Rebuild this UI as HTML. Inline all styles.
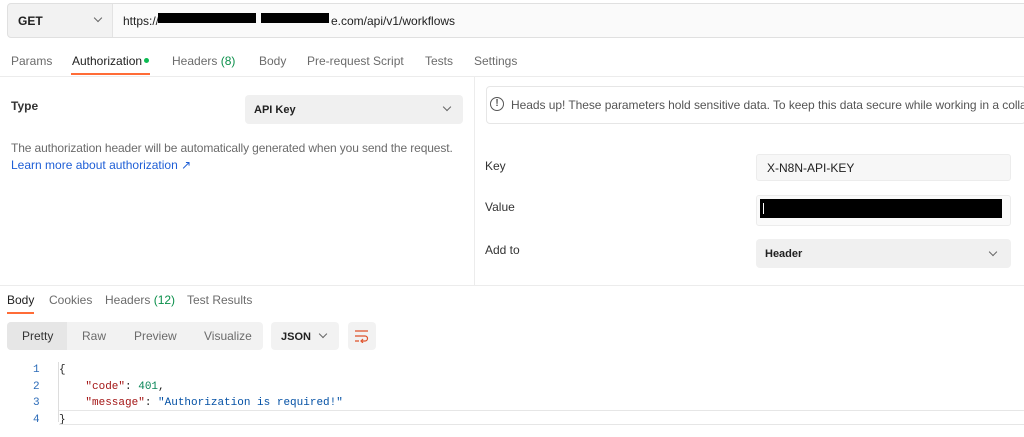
<!DOCTYPE html><html><head><style>
*{margin:0;padding:0;box-sizing:border-box}
body{width:1024px;height:437px;background:#fff;font-family:"Liberation Sans",sans-serif;font-size:12px;color:#212121;position:relative;overflow:hidden}
.a{position:absolute;white-space:nowrap}
.g{color:#6b6b6b}
.chev{position:absolute;width:6px;height:6px;border-right:1.2px solid #666;border-bottom:1.2px solid #666;transform:rotate(45deg)}
.mono{font-family:"Liberation Mono",monospace;font-size:12px}
</style></head><body>
<div class="a" style="left:7px;top:3px;width:1017px;height:35px;background:#f2f2f2;border:1px solid #e0e0e0;border-radius:4px 0 0 4px"></div>
<div class="a" style="left:112px;top:4px;width:912px;height:33px;background:#fafafa;border-left:1px solid #e3e3e3"></div>
<div class="a" style="left:18px;top:14px;font-weight:bold">GET</div>
<div class="chev" style="left:95px;top:15px"></div>
<div class="a" style="left:123px;top:14px">https://</div>
<div class="a" style="left:158px;top:13px;width:98px;height:10px;background:#000"></div>
<div class="a" style="left:261px;top:13px;width:68px;height:10px;background:#000"></div>
<div class="a" style="left:331px;top:14px">e.com/api/v1/workflows</div>

<div class="a g" style="left:11px;top:54px">Params</div>
<div class="a" style="left:72px;top:54px">Authorization</div>
<div class="a" style="left:144px;top:58px;width:5px;height:5px;border-radius:50%;background:#0cbb52"></div>
<div class="a" style="left:71px;top:73px;width:79px;height:2px;background:#ff6c37"></div>
<div class="a g" style="left:172px;top:54px">Headers <span style="color:#0a8f4a">(8)</span></div>
<div class="a g" style="left:259px;top:54px">Body</div>
<div class="a g" style="left:307px;top:54px">Pre-request Script</div>
<div class="a g" style="left:425px;top:54px">Tests</div>
<div class="a g" style="left:474px;top:54px">Settings</div>
<div class="a" style="left:0;top:76px;width:1024px;height:1px;background:#ececec"></div>
<div class="a" style="left:474px;top:77px;width:1px;height:208px;background:#ececec"></div>

<div class="a" style="left:11px;top:99px;font-weight:bold;color:#333">Type</div>
<div class="a" style="left:245px;top:95px;width:218px;height:29px;background:#f0f0f0;border-radius:4px"></div>
<div class="a" style="left:254px;top:104px;font-size:11px;font-weight:bold">API Key</div>
<div class="chev" style="left:444px;top:104px"></div>
<div class="a g" style="left:11px;top:141px;letter-spacing:-0.12px">The authorization header will be automatically generated when you send the request.</div>
<div class="a" style="left:11px;top:158px;color:#1f5fd6">Learn more about authorization ↗</div>

<div class="a" style="left:486px;top:86px;width:540px;height:38px;border:1px solid #e6e6e6;border-radius:4px"></div>
<div class="a" style="left:490px;top:97px;width:14px;height:14px;border:1.3px solid #555;border-radius:50%;font-size:10px;text-align:center;line-height:12px;font-weight:bold;color:#555">!</div>
<div class="a g" style="left:511px;top:98px;color:#555;letter-spacing:-0.05px">Heads up! These parameters hold sensitive data. To keep this data secure while working in a collab</div>

<div class="a g" style="left:485px;top:159px;color:#333">Key</div>
<div class="a" style="left:756px;top:154px;width:255px;height:27px;background:#f7f7f7;border:1px solid #ececec;border-radius:3px"></div>
<div class="a" style="left:767px;top:161px">X-N8N-API-KEY</div>
<div class="a g" style="left:485px;top:200px;color:#333">Value</div>
<div class="a" style="left:756px;top:195px;width:255px;height:31px;background:#fafafa;border:1px solid #ececec;border-radius:3px"></div>
<div class="a" style="left:760px;top:199px;width:242px;height:19px;background:#000"></div>
<div class="a" style="left:763px;top:203px;width:1px;height:11px;background:#fff"></div>
<div class="a g" style="left:485px;top:243px;color:#333">Add to</div>
<div class="a" style="left:756px;top:239px;width:255px;height:29px;background:#f0f0f0;border-radius:4px"></div>
<div class="a" style="left:765px;top:248px;font-size:11px;font-weight:bold">Header</div>
<div class="chev" style="left:990px;top:249px"></div>

<div class="a" style="left:0;top:285px;width:1024px;height:1px;background:#ececec"></div>
<div class="a" style="left:7px;top:293px">Body</div>
<div class="a" style="left:7px;top:312px;width:27px;height:2px;background:#ff6c37"></div>
<div class="a g" style="left:49px;top:293px">Cookies</div>
<div class="a g" style="left:105px;top:293px">Headers <span style="color:#0a8f4a">(12)</span></div>
<div class="a g" style="left:187px;top:293px">Test Results</div>

<div class="a" style="left:7px;top:322px;width:256px;height:28px;background:#f2f2f2;border-radius:4px"></div>
<div class="a" style="left:7px;top:322px;width:60px;height:28px;background:#e6e6e6;border-radius:4px 0 0 4px"></div>
<div class="a" style="left:22px;top:329px;color:#333">Pretty</div>
<div class="a g" style="left:82px;top:329px">Raw</div>
<div class="a g" style="left:134px;top:329px">Preview</div>
<div class="a g" style="left:204px;top:329px">Visualize</div>
<div class="a" style="left:271px;top:322px;width:68px;height:28px;background:#f2f2f2;border-radius:4px"></div>
<div class="a" style="left:281px;top:331px;font-size:11px;font-weight:bold">JSON</div>
<div class="chev" style="left:320px;top:331px"></div>
<div class="a" style="left:348px;top:322px;width:28px;height:28px;background:#f2f2f2;border-radius:4px"></div>
<svg class="a" style="left:354px;top:329px" width="16" height="14"><path d="M1 2h13M1 7h10a2.5 2.5 0 0 1 0 5H8M1 12h4M9 10l-2 2 2 2" stroke="#e0512a" fill="none" stroke-width="1.2"/></svg>

<div class="a mono" style="left:33px;top:362px;color:#2b6bb8;line-height:16.5px;font-size:11px">1<br>2<br>3<br>4</div>
<div class="a" style="left:58px;top:362px;width:1px;height:60px;background:#ddd"></div>
<div class="a mono" style="left:59px;top:362px;line-height:16.5px;font-size:11px">{<br>&nbsp;&nbsp;&nbsp;&nbsp;<span style="color:#a31515">"code"</span>: <span style="color:#098658">401</span>,<br>&nbsp;&nbsp;&nbsp;&nbsp;<span style="color:#a31515">"message"</span>: <span style="color:#0451a5">"Authorization is required!"</span><br>}</div>
<div class="a" style="left:59px;top:410px;width:965px;height:15px;border-top:1px solid #e6e6e6;border-bottom:1px solid #e6e6e6"></div>
</body></html>
